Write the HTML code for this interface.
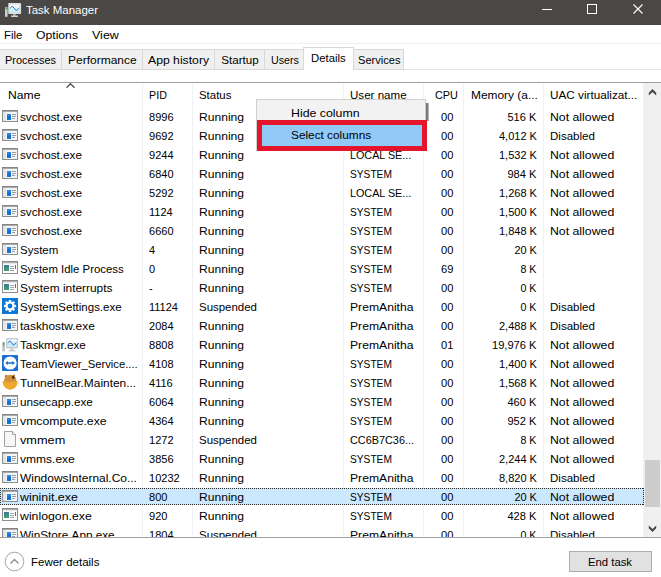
<!DOCTYPE html>
<html><head><meta charset="utf-8"><title>Task Manager</title>
<style>
html,body{margin:0;padding:0;}
body{width:661px;height:577px;overflow:hidden;background:#fff;font-family:"Liberation Sans",sans-serif;font-size:11.6px;color:#000;position:relative;}
.abs{position:absolute;}
.t{position:absolute;white-space:pre;line-height:14px;height:14px;transform-origin:0 0;}
#title{left:0;top:0;width:661px;height:25px;background:#4a4846;}
#menuline{left:0;top:43px;width:661px;height:1px;background:#f0f0f0;}
.tab{position:absolute;top:49px;height:21px;background:#f0f0f0;border:1px solid #d9d9d9;box-sizing:border-box;}
.tab.act{top:47px;height:23px;background:#fff;border-bottom:none;}
#tabline{left:0;top:69px;width:661px;height:1px;background:#e6e6e6;}
#listtop{left:0;top:82px;width:661px;height:1px;background:#a0a0a0;}
#listbot{left:0;top:537px;width:661px;height:1px;background:#a0a0a0;}
.vl{position:absolute;top:83px;width:1px;height:454px;background:#eef2f7;}
#clip{left:0;top:107px;width:661px;height:430px;overflow:hidden;}
#inner{position:absolute;left:0;top:-107px;width:661px;height:577px;}
#sel{left:0;top:488px;width:644px;height:17px;background:#cce8ff;box-sizing:border-box;}
#sel:before,#sel:after{content:"";position:absolute;left:0;width:644px;height:1px;background-image:repeating-linear-gradient(90deg,#2b2b2b 0 1px,transparent 1px 2px);}
#sel:before{top:0;} #sel:after{top:16px;}
#selr{left:643px;top:488px;width:1px;height:17px;background-image:repeating-linear-gradient(180deg,#2b2b2b 0 1px,transparent 1px 2px);}
#sell{left:0;top:488px;width:1px;height:17px;background-image:repeating-linear-gradient(180deg,#2b2b2b 0 1px,transparent 1px 2px);}
#sb{left:644px;top:83px;width:17px;height:454px;background:#f0f0f0;}
#thumb{left:645px;top:460px;width:15px;height:47px;background:#cdcdcd;}
#ctx{left:256px;top:99px;width:170px;height:52px;background:#f2f2f2;border:1px solid #cfcfcf;box-sizing:border-box;}
#shd{left:426px;top:103px;width:3px;height:18px;background:linear-gradient(90deg,#6a6a6a 0,#8a8a8a 60%,#d0d0d0 100%);}
#hl{left:259px;top:123px;width:165px;height:24px;background:#91c9f7;}
#red{left:257px;top:120px;width:170px;height:31px;border:5px solid #e5142b;box-sizing:border-box;}
#btn{left:569px;top:551px;width:83px;height:21px;border:1px solid #adadad;background:#e1e1e1;box-sizing:border-box;}
</style></head><body>
<div id="title" class="abs"></div>
<svg class="abs" style="left:0;top:0" width="30" height="24" viewBox="0 0 30 24"><defs><linearGradient id="scr" x1="0" y1="0" x2="0" y2="1"><stop offset="0" stop-color="#ffffff"/><stop offset="1" stop-color="#bfe8f8"/></linearGradient><linearGradient id="gsq" x1="0" y1="0" x2="0.300" y2="1"><stop offset="0" stop-color="#3a6fa8"/><stop offset="1" stop-color="#41a06a"/></linearGradient></defs><rect x="8.200" y="3" width="12.900" height="11.100" rx="0.800" fill="#dcdcdc"/><rect x="9.800" y="4.600" width="9.400" height="7.800" fill="url(#scr)"/><polyline points="10.200,8.400 12.300,6.100 16.400,10.700 18.900,8.200" fill="none" stroke="#2a74b8" stroke-width="1"/><rect x="13.200" y="14.100" width="2.400" height="1.500" fill="#c4c4c4"/><rect x="10.900" y="15.500" width="7.100" height="1.400" rx="0.600" fill="#d6d6d6"/><rect x="5" y="7.300" width="2.600" height="9.500" fill="#cfcfcf"/><rect x="5.800" y="8" width="1.300" height="1.300" fill="#2f9a3a"/></svg>
<svg class="abs" style="left:540px;top:0" width="121" height="24" viewBox="0 0 121 24"><path d="M2 9.500 H12" stroke="#fff" stroke-width="1" fill="none"/><rect x="47.500" y="4.500" width="9" height="9" fill="none" stroke="#fff"/><path d="M93.500 4.500 L102.500 13.500 M102.500 4.500 L93.500 13.500" stroke="#fff" stroke-width="1.100" fill="none"/></svg>
<div id="menuline" class="abs"></div>
<div id="tabline" class="abs"></div>
<div class="tab" style="left:-1px;width:63px"></div>
<div class="tab" style="left:61px;width:82px"></div>
<div class="tab" style="left:142px;width:73px"></div>
<div class="tab" style="left:214px;width:51px"></div>
<div class="tab" style="left:264px;width:41px"></div>
<div class="tab" style="left:353px;width:51px"></div>
<div class="tab act" style="left:303px;width:51px"></div>
<div id="listtop" class="abs"></div>
<div class="vl" style="left:142px"></div><div class="vl" style="left:192px"></div><div class="vl" style="left:343px"></div><div class="vl" style="left:423px"></div><div class="vl" style="left:463px"></div><div class="vl" style="left:543px"></div><div class="vl" style="left:643px"></div>
<svg class="abs" style="left:66px;top:83px" width="9" height="5" viewBox="0 0 9 5"><path d="M0.500 4.700 L4.500 0.700 L8.500 4.700" fill="none" stroke="#4a4a4a" stroke-width="1.300"/></svg>
<div id="clip" class="abs"><div id="inner">
<div id="sel" class="abs"></div><div id="selr" class="abs"></div><div id="sell" class="abs"></div>
<svg class="abs" style="left:2px;top:108px" width="16" height="16" viewBox="0 0 16 16"><rect x="0.500" y="2.500" width="15" height="11" fill="#f3f6f9" stroke="#8e8e8e"/><rect x="0" y="2" width="16" height="1" fill="#858585"/><rect x="1" y="3" width="14" height="1" fill="#a9a9a9"/><rect x="1" y="4" width="3" height="9" fill="#e1e6ec"/><rect x="5" y="6" width="4" height="6" fill="#1373d3"/><rect x="5" y="6" width="4" height="2" fill="#2b86de"/><rect x="10" y="6" width="4" height="1" fill="#9b9b9b"/><rect x="10" y="8" width="4" height="1" fill="#9b9b9b"/><rect x="10" y="10" width="3" height="1" fill="#9b9b9b"/></svg>
<svg class="abs" style="left:2px;top:127px" width="16" height="16" viewBox="0 0 16 16"><rect x="0.500" y="2.500" width="15" height="11" fill="#f3f6f9" stroke="#8e8e8e"/><rect x="0" y="2" width="16" height="1" fill="#858585"/><rect x="1" y="3" width="14" height="1" fill="#a9a9a9"/><rect x="1" y="4" width="3" height="9" fill="#e1e6ec"/><rect x="5" y="6" width="4" height="6" fill="#1373d3"/><rect x="5" y="6" width="4" height="2" fill="#2b86de"/><rect x="10" y="6" width="4" height="1" fill="#9b9b9b"/><rect x="10" y="8" width="4" height="1" fill="#9b9b9b"/><rect x="10" y="10" width="3" height="1" fill="#9b9b9b"/></svg>
<svg class="abs" style="left:2px;top:146px" width="16" height="16" viewBox="0 0 16 16"><rect x="0.500" y="2.500" width="15" height="11" fill="#f3f6f9" stroke="#8e8e8e"/><rect x="0" y="2" width="16" height="1" fill="#858585"/><rect x="1" y="3" width="14" height="1" fill="#a9a9a9"/><rect x="1" y="4" width="3" height="9" fill="#e1e6ec"/><rect x="5" y="6" width="4" height="6" fill="#1373d3"/><rect x="5" y="6" width="4" height="2" fill="#2b86de"/><rect x="10" y="6" width="4" height="1" fill="#9b9b9b"/><rect x="10" y="8" width="4" height="1" fill="#9b9b9b"/><rect x="10" y="10" width="3" height="1" fill="#9b9b9b"/></svg>
<svg class="abs" style="left:2px;top:165px" width="16" height="16" viewBox="0 0 16 16"><rect x="0.500" y="2.500" width="15" height="11" fill="#f3f6f9" stroke="#8e8e8e"/><rect x="0" y="2" width="16" height="1" fill="#858585"/><rect x="1" y="3" width="14" height="1" fill="#a9a9a9"/><rect x="1" y="4" width="3" height="9" fill="#e1e6ec"/><rect x="5" y="6" width="4" height="6" fill="#1373d3"/><rect x="5" y="6" width="4" height="2" fill="#2b86de"/><rect x="10" y="6" width="4" height="1" fill="#9b9b9b"/><rect x="10" y="8" width="4" height="1" fill="#9b9b9b"/><rect x="10" y="10" width="3" height="1" fill="#9b9b9b"/></svg>
<svg class="abs" style="left:2px;top:184px" width="16" height="16" viewBox="0 0 16 16"><rect x="0.500" y="2.500" width="15" height="11" fill="#f3f6f9" stroke="#8e8e8e"/><rect x="0" y="2" width="16" height="1" fill="#858585"/><rect x="1" y="3" width="14" height="1" fill="#a9a9a9"/><rect x="1" y="4" width="3" height="9" fill="#e1e6ec"/><rect x="5" y="6" width="4" height="6" fill="#1373d3"/><rect x="5" y="6" width="4" height="2" fill="#2b86de"/><rect x="10" y="6" width="4" height="1" fill="#9b9b9b"/><rect x="10" y="8" width="4" height="1" fill="#9b9b9b"/><rect x="10" y="10" width="3" height="1" fill="#9b9b9b"/></svg>
<svg class="abs" style="left:2px;top:203px" width="16" height="16" viewBox="0 0 16 16"><rect x="0.500" y="2.500" width="15" height="11" fill="#f3f6f9" stroke="#8e8e8e"/><rect x="0" y="2" width="16" height="1" fill="#858585"/><rect x="1" y="3" width="14" height="1" fill="#a9a9a9"/><rect x="1" y="4" width="3" height="9" fill="#e1e6ec"/><rect x="5" y="6" width="4" height="6" fill="#1373d3"/><rect x="5" y="6" width="4" height="2" fill="#2b86de"/><rect x="10" y="6" width="4" height="1" fill="#9b9b9b"/><rect x="10" y="8" width="4" height="1" fill="#9b9b9b"/><rect x="10" y="10" width="3" height="1" fill="#9b9b9b"/></svg>
<svg class="abs" style="left:2px;top:222px" width="16" height="16" viewBox="0 0 16 16"><rect x="0.500" y="2.500" width="15" height="11" fill="#f3f6f9" stroke="#8e8e8e"/><rect x="0" y="2" width="16" height="1" fill="#858585"/><rect x="1" y="3" width="14" height="1" fill="#a9a9a9"/><rect x="1" y="4" width="3" height="9" fill="#e1e6ec"/><rect x="5" y="6" width="4" height="6" fill="#1373d3"/><rect x="5" y="6" width="4" height="2" fill="#2b86de"/><rect x="10" y="6" width="4" height="1" fill="#9b9b9b"/><rect x="10" y="8" width="4" height="1" fill="#9b9b9b"/><rect x="10" y="10" width="3" height="1" fill="#9b9b9b"/></svg>
<svg class="abs" style="left:2px;top:241px" width="16" height="16" viewBox="0 0 16 16"><rect x="0.500" y="2.500" width="15" height="11" fill="#f3f6f9" stroke="#8e8e8e"/><rect x="0" y="2" width="16" height="1" fill="#858585"/><rect x="1" y="3" width="14" height="1" fill="#a9a9a9"/><rect x="1" y="4" width="3" height="9" fill="#e1e6ec"/><rect x="5" y="6" width="4" height="6" fill="#1373d3"/><rect x="5" y="6" width="4" height="2" fill="#2b86de"/><rect x="10" y="6" width="4" height="1" fill="#9b9b9b"/><rect x="10" y="8" width="4" height="1" fill="#9b9b9b"/><rect x="10" y="10" width="3" height="1" fill="#9b9b9b"/></svg>
<svg class="abs" style="left:2px;top:260px" width="16" height="16" viewBox="0 0 16 16"><rect x="0.500" y="1.500" width="15" height="12" fill="#fbfcfd" stroke="#8e8e8e"/><rect x="0" y="1" width="16" height="1" fill="#8a8a8a"/><rect x="1" y="2" width="14" height="1" fill="#b4b4b4"/><rect x="1" y="3" width="14" height="1" fill="#e2e6ea"/><rect x="2" y="5" width="5" height="6" fill="url(#gsq)"/><rect x="8" y="6" width="4" height="1" fill="#a5a5a5"/><rect x="8" y="8" width="4" height="1" fill="#a5a5a5"/><rect x="8" y="10" width="4" height="1" fill="#a5a5a5"/><rect x="13" y="5" width="1" height="4" fill="#2f78c4"/></svg>
<svg class="abs" style="left:2px;top:279px" width="16" height="16" viewBox="0 0 16 16"><rect x="0.500" y="1.500" width="15" height="12" fill="#fbfcfd" stroke="#8e8e8e"/><rect x="0" y="1" width="16" height="1" fill="#8a8a8a"/><rect x="1" y="2" width="14" height="1" fill="#b4b4b4"/><rect x="1" y="3" width="14" height="1" fill="#e2e6ea"/><rect x="2" y="5" width="5" height="6" fill="url(#gsq)"/><rect x="8" y="6" width="4" height="1" fill="#a5a5a5"/><rect x="8" y="8" width="4" height="1" fill="#a5a5a5"/><rect x="8" y="10" width="4" height="1" fill="#a5a5a5"/><rect x="13" y="5" width="1" height="4" fill="#2f78c4"/></svg>
<svg class="abs" style="left:2px;top:298px" width="16" height="16" viewBox="0 0 16 16"><rect width="16" height="16" fill="#0a78d6"/><g fill="#fff"><circle cx="8" cy="8" r="4.500"/><rect x="6.800" y="2" width="2.400" height="12"/><rect x="6.800" y="2" width="2.400" height="12" transform="rotate(45 8 8)"/><rect x="6.800" y="2" width="2.400" height="12" transform="rotate(90 8 8)"/><rect x="6.800" y="2" width="2.400" height="12" transform="rotate(135 8 8)"/></g><circle cx="8" cy="8" r="2.400" fill="#0a78d6"/></svg>
<svg class="abs" style="left:2px;top:317px" width="16" height="16" viewBox="0 0 16 16"><rect x="0.500" y="2.500" width="15" height="11" fill="#f3f6f9" stroke="#8e8e8e"/><rect x="0" y="2" width="16" height="1" fill="#858585"/><rect x="1" y="3" width="14" height="1" fill="#a9a9a9"/><rect x="1" y="4" width="3" height="9" fill="#e1e6ec"/><rect x="5" y="6" width="4" height="6" fill="#1373d3"/><rect x="5" y="6" width="4" height="2" fill="#2b86de"/><rect x="10" y="6" width="4" height="1" fill="#9b9b9b"/><rect x="10" y="8" width="4" height="1" fill="#9b9b9b"/><rect x="10" y="10" width="3" height="1" fill="#9b9b9b"/></svg>
<svg class="abs" style="left:2px;top:336px" width="16" height="16" viewBox="0 0 16 16"><rect x="4" y="2" width="12" height="10.500" rx="0.700" fill="#c6cbd0"/><rect x="5.400" y="3.400" width="9.200" height="7.600" fill="#c9ecfa"/><rect x="5.400" y="3.400" width="9.200" height="3" fill="#eaf8fe"/><polyline points="5.800,7 7.800,4.800 11.600,9.200 14.200,6.800" fill="none" stroke="#2a74b8" stroke-width="1"/><rect x="8.800" y="12.500" width="2.400" height="1.500" fill="#bcc0c3"/><rect x="6.500" y="14" width="7" height="1.400" rx="0.600" fill="#c9cdd0"/><rect x="0.300" y="6" width="2.600" height="9.400" fill="#b9bfb9"/><rect x="0.900" y="6.600" width="1.400" height="3" fill="#58b048"/></svg>
<svg class="abs" style="left:2px;top:355px" width="16" height="16" viewBox="0 0 16 16"><rect width="16" height="16" rx="0.800" fill="#1a70d2"/><circle cx="8.100" cy="8" r="6.600" fill="#fff"/><path d="M3.200 8 L6 5.900 V7.350 H10.200 V5.900 L13 8 L10.200 10.100 V8.650 H6 V10.100 Z" fill="#1a70d2"/></svg>
<svg class="abs" style="left:2px;top:374px" width="16" height="16" viewBox="0 0 16 16"><circle cx="4.300" cy="2.200" r="1.500" fill="#bd7c33"/><circle cx="11.900" cy="1.700" r="1.200" fill="#bd7c33"/><ellipse cx="8.300" cy="6.300" rx="6.100" ry="5.600" fill="#d28f3e"/><path d="M0.600 7.400 H15.700 A7.550 8.400 0 0 1 0.600 7.400 Z" fill="#eeaa2d"/><path d="M0.600 7.400 H15.700 L15.600 8.300 H0.700 Z" fill="#d8982f"/><ellipse cx="11.200" cy="3.400" rx="1.100" ry="1.400" fill="#2b2018"/></svg>
<svg class="abs" style="left:2px;top:393px" width="16" height="16" viewBox="0 0 16 16"><rect x="0.500" y="2.500" width="15" height="11" fill="#f3f6f9" stroke="#8e8e8e"/><rect x="0" y="2" width="16" height="1" fill="#858585"/><rect x="1" y="3" width="14" height="1" fill="#a9a9a9"/><rect x="1" y="4" width="3" height="9" fill="#e1e6ec"/><rect x="5" y="6" width="4" height="6" fill="#1373d3"/><rect x="5" y="6" width="4" height="2" fill="#2b86de"/><rect x="10" y="6" width="4" height="1" fill="#9b9b9b"/><rect x="10" y="8" width="4" height="1" fill="#9b9b9b"/><rect x="10" y="10" width="3" height="1" fill="#9b9b9b"/></svg>
<svg class="abs" style="left:2px;top:412px" width="16" height="16" viewBox="0 0 16 16"><rect x="0.500" y="2.500" width="15" height="11" fill="#f3f6f9" stroke="#8e8e8e"/><rect x="0" y="2" width="16" height="1" fill="#858585"/><rect x="1" y="3" width="14" height="1" fill="#a9a9a9"/><rect x="1" y="4" width="3" height="9" fill="#e1e6ec"/><rect x="5" y="6" width="4" height="6" fill="#1373d3"/><rect x="5" y="6" width="4" height="2" fill="#2b86de"/><rect x="10" y="6" width="4" height="1" fill="#9b9b9b"/><rect x="10" y="8" width="4" height="1" fill="#9b9b9b"/><rect x="10" y="10" width="3" height="1" fill="#9b9b9b"/></svg>
<svg class="abs" style="left:2px;top:431px" width="16" height="16" viewBox="0 0 16 16"><path d="M2.500 0.500 H10.500 L13.500 3.500 V15.500 H2.500 Z" fill="#f7f7f7" stroke="#a3a3a3"/><path d="M10.500 0.500 V3.500 H13.500" fill="#fff" stroke="#a3a3a3"/></svg>
<svg class="abs" style="left:2px;top:450px" width="16" height="16" viewBox="0 0 16 16"><rect x="0.500" y="2.500" width="15" height="11" fill="#f3f6f9" stroke="#8e8e8e"/><rect x="0" y="2" width="16" height="1" fill="#858585"/><rect x="1" y="3" width="14" height="1" fill="#a9a9a9"/><rect x="1" y="4" width="3" height="9" fill="#e1e6ec"/><rect x="5" y="6" width="4" height="6" fill="#1373d3"/><rect x="5" y="6" width="4" height="2" fill="#2b86de"/><rect x="10" y="6" width="4" height="1" fill="#9b9b9b"/><rect x="10" y="8" width="4" height="1" fill="#9b9b9b"/><rect x="10" y="10" width="3" height="1" fill="#9b9b9b"/></svg>
<svg class="abs" style="left:2px;top:469px" width="16" height="16" viewBox="0 0 16 16"><rect x="0.500" y="2.500" width="15" height="11" fill="#f3f6f9" stroke="#8e8e8e"/><rect x="0" y="2" width="16" height="1" fill="#858585"/><rect x="1" y="3" width="14" height="1" fill="#a9a9a9"/><rect x="1" y="4" width="3" height="9" fill="#e1e6ec"/><rect x="5" y="6" width="4" height="6" fill="#1373d3"/><rect x="5" y="6" width="4" height="2" fill="#2b86de"/><rect x="10" y="6" width="4" height="1" fill="#9b9b9b"/><rect x="10" y="8" width="4" height="1" fill="#9b9b9b"/><rect x="10" y="10" width="3" height="1" fill="#9b9b9b"/></svg>
<svg class="abs" style="left:2px;top:488px" width="16" height="16" viewBox="0 0 16 16"><rect x="0.500" y="2.500" width="15" height="11" fill="#f3f6f9" stroke="#8e8e8e"/><rect x="0" y="2" width="16" height="1" fill="#858585"/><rect x="1" y="3" width="14" height="1" fill="#a9a9a9"/><rect x="1" y="4" width="3" height="9" fill="#e1e6ec"/><rect x="5" y="6" width="4" height="6" fill="#1373d3"/><rect x="5" y="6" width="4" height="2" fill="#2b86de"/><rect x="10" y="6" width="4" height="1" fill="#9b9b9b"/><rect x="10" y="8" width="4" height="1" fill="#9b9b9b"/><rect x="10" y="10" width="3" height="1" fill="#9b9b9b"/></svg>
<svg class="abs" style="left:2px;top:507px" width="16" height="16" viewBox="0 0 16 16"><rect x="0.500" y="1.500" width="15" height="12" fill="#fbfcfd" stroke="#8e8e8e"/><rect x="0" y="1" width="16" height="1" fill="#8a8a8a"/><rect x="1" y="2" width="14" height="1" fill="#b4b4b4"/><rect x="1" y="3" width="14" height="1" fill="#e2e6ea"/><rect x="2" y="5" width="5" height="6" fill="url(#gsq)"/><rect x="8" y="6" width="4" height="1" fill="#a5a5a5"/><rect x="8" y="8" width="4" height="1" fill="#a5a5a5"/><rect x="8" y="10" width="4" height="1" fill="#a5a5a5"/><rect x="13" y="5" width="1" height="4" fill="#2f78c4"/></svg>
<svg class="abs" style="left:2px;top:526px" width="16" height="16" viewBox="0 0 16 16"><rect x="0.500" y="2.500" width="15" height="11" fill="#f3f6f9" stroke="#8e8e8e"/><rect x="0" y="2" width="16" height="1" fill="#858585"/><rect x="1" y="3" width="14" height="1" fill="#a9a9a9"/><rect x="1" y="4" width="3" height="9" fill="#e1e6ec"/><rect x="5" y="6" width="4" height="6" fill="#1373d3"/><rect x="5" y="6" width="4" height="2" fill="#2b86de"/><rect x="10" y="6" width="4" height="1" fill="#9b9b9b"/><rect x="10" y="8" width="4" height="1" fill="#9b9b9b"/><rect x="10" y="10" width="3" height="1" fill="#9b9b9b"/></svg>
<span class="t" style="left:19.7px;top:110.0px;transform:scaleX(1.013);">svchost.exe</span>
<span class="t" style="left:148.9px;top:110.0px;transform:scaleX(0.950);">8996</span>
<span class="t" style="left:198.8px;top:110.0px;transform:scaleX(1.044);">Running</span>
<span class="t" style="left:440.7px;top:110.0px;transform:scaleX(0.960);">00</span>
<span class="t" style="right:124.3px;top:110.0px;transform-origin:100% 0;transform:scaleX(0.954);">516 K</span>
<span class="t" style="left:550.0px;top:110.0px;transform:scaleX(1.060);">Not allowed</span>
<span class="t" style="left:19.7px;top:129.0px;transform:scaleX(1.013);">svchost.exe</span>
<span class="t" style="left:148.9px;top:129.0px;transform:scaleX(0.950);">9692</span>
<span class="t" style="left:198.8px;top:129.0px;transform:scaleX(1.044);">Running</span>
<span class="t" style="left:440.7px;top:129.0px;transform:scaleX(0.960);">00</span>
<span class="t" style="right:124.3px;top:129.0px;transform-origin:100% 0;transform:scaleX(0.950);">4,012 K</span>
<span class="t" style="left:550.0px;top:129.0px;transform:scaleX(0.995);">Disabled</span>
<span class="t" style="left:19.7px;top:148.0px;transform:scaleX(1.013);">svchost.exe</span>
<span class="t" style="left:148.9px;top:148.0px;transform:scaleX(0.950);">9244</span>
<span class="t" style="left:198.8px;top:148.0px;transform:scaleX(1.044);">Running</span>
<span class="t" style="left:349.9px;top:148.0px;transform:scaleX(0.929);">LOCAL SE...</span>
<span class="t" style="left:440.7px;top:148.0px;transform:scaleX(0.960);">00</span>
<span class="t" style="right:124.3px;top:148.0px;transform-origin:100% 0;transform:scaleX(0.950);">1,532 K</span>
<span class="t" style="left:550.0px;top:148.0px;transform:scaleX(1.060);">Not allowed</span>
<span class="t" style="left:19.7px;top:167.0px;transform:scaleX(1.013);">svchost.exe</span>
<span class="t" style="left:148.9px;top:167.0px;transform:scaleX(0.950);">6840</span>
<span class="t" style="left:198.8px;top:167.0px;transform:scaleX(1.044);">Running</span>
<span class="t" style="left:349.9px;top:167.0px;transform:scaleX(0.879);">SYSTEM</span>
<span class="t" style="left:440.7px;top:167.0px;transform:scaleX(0.960);">00</span>
<span class="t" style="right:124.3px;top:167.0px;transform-origin:100% 0;transform:scaleX(0.954);">984 K</span>
<span class="t" style="left:550.0px;top:167.0px;transform:scaleX(1.060);">Not allowed</span>
<span class="t" style="left:19.7px;top:186.0px;transform:scaleX(1.013);">svchost.exe</span>
<span class="t" style="left:148.9px;top:186.0px;transform:scaleX(0.950);">5292</span>
<span class="t" style="left:198.8px;top:186.0px;transform:scaleX(1.044);">Running</span>
<span class="t" style="left:349.9px;top:186.0px;transform:scaleX(0.929);">LOCAL SE...</span>
<span class="t" style="left:440.7px;top:186.0px;transform:scaleX(0.960);">00</span>
<span class="t" style="right:124.3px;top:186.0px;transform-origin:100% 0;transform:scaleX(0.950);">1,268 K</span>
<span class="t" style="left:550.0px;top:186.0px;transform:scaleX(1.060);">Not allowed</span>
<span class="t" style="left:19.7px;top:205.0px;transform:scaleX(1.013);">svchost.exe</span>
<span class="t" style="left:148.9px;top:205.0px;transform:scaleX(0.950);">1124</span>
<span class="t" style="left:198.8px;top:205.0px;transform:scaleX(1.044);">Running</span>
<span class="t" style="left:349.9px;top:205.0px;transform:scaleX(0.879);">SYSTEM</span>
<span class="t" style="left:440.7px;top:205.0px;transform:scaleX(0.960);">00</span>
<span class="t" style="right:124.3px;top:205.0px;transform-origin:100% 0;transform:scaleX(0.950);">1,500 K</span>
<span class="t" style="left:550.0px;top:205.0px;transform:scaleX(1.060);">Not allowed</span>
<span class="t" style="left:19.7px;top:224.0px;transform:scaleX(1.013);">svchost.exe</span>
<span class="t" style="left:148.9px;top:224.0px;transform:scaleX(0.950);">6660</span>
<span class="t" style="left:198.8px;top:224.0px;transform:scaleX(1.044);">Running</span>
<span class="t" style="left:349.9px;top:224.0px;transform:scaleX(0.879);">SYSTEM</span>
<span class="t" style="left:440.7px;top:224.0px;transform:scaleX(0.960);">00</span>
<span class="t" style="right:124.3px;top:224.0px;transform-origin:100% 0;transform:scaleX(0.950);">1,848 K</span>
<span class="t" style="left:550.0px;top:224.0px;transform:scaleX(1.060);">Not allowed</span>
<span class="t" style="left:19.7px;top:243.0px;transform:scaleX(0.991);">System</span>
<span class="t" style="left:148.9px;top:243.0px;transform:scaleX(0.950);">4</span>
<span class="t" style="left:198.8px;top:243.0px;transform:scaleX(1.044);">Running</span>
<span class="t" style="left:349.9px;top:243.0px;transform:scaleX(0.879);">SYSTEM</span>
<span class="t" style="left:440.7px;top:243.0px;transform:scaleX(0.960);">00</span>
<span class="t" style="right:124.3px;top:243.0px;transform-origin:100% 0;transform:scaleX(0.941);">20 K</span>
<span class="t" style="left:19.7px;top:262.0px;transform:scaleX(0.981);">System Idle Process</span>
<span class="t" style="left:148.9px;top:262.0px;transform:scaleX(0.950);">0</span>
<span class="t" style="left:198.8px;top:262.0px;transform:scaleX(1.044);">Running</span>
<span class="t" style="left:349.9px;top:262.0px;transform:scaleX(0.879);">SYSTEM</span>
<span class="t" style="left:440.7px;top:262.0px;transform:scaleX(0.960);">69</span>
<span class="t" style="right:124.3px;top:262.0px;transform-origin:100% 0;transform:scaleX(0.917);">8 K</span>
<span class="t" style="left:19.7px;top:281.0px;transform:scaleX(1.025);">System interrupts</span>
<span class="t" style="left:148.9px;top:281.0px;transform:scaleX(0.950);">-</span>
<span class="t" style="left:198.8px;top:281.0px;transform:scaleX(1.044);">Running</span>
<span class="t" style="left:349.9px;top:281.0px;transform:scaleX(0.879);">SYSTEM</span>
<span class="t" style="left:440.7px;top:281.0px;transform:scaleX(0.960);">00</span>
<span class="t" style="right:124.3px;top:281.0px;transform-origin:100% 0;transform:scaleX(0.917);">0 K</span>
<span class="t" style="left:19.7px;top:300.0px;transform:scaleX(0.992);">SystemSettings.exe</span>
<span class="t" style="left:148.9px;top:300.0px;transform:scaleX(0.950);">11124</span>
<span class="t" style="left:198.8px;top:300.0px;transform:scaleX(0.987);">Suspended</span>
<span class="t" style="left:349.9px;top:300.0px;transform:scaleX(1.048);">PremAnitha</span>
<span class="t" style="left:440.7px;top:300.0px;transform:scaleX(0.960);">00</span>
<span class="t" style="right:124.3px;top:300.0px;transform-origin:100% 0;transform:scaleX(0.917);">0 K</span>
<span class="t" style="left:550.0px;top:300.0px;transform:scaleX(0.995);">Disabled</span>
<span class="t" style="left:19.7px;top:319.0px;transform:scaleX(1.027);">taskhostw.exe</span>
<span class="t" style="left:148.9px;top:319.0px;transform:scaleX(0.950);">2084</span>
<span class="t" style="left:198.8px;top:319.0px;transform:scaleX(1.044);">Running</span>
<span class="t" style="left:349.9px;top:319.0px;transform:scaleX(1.048);">PremAnitha</span>
<span class="t" style="left:440.7px;top:319.0px;transform:scaleX(0.960);">00</span>
<span class="t" style="right:124.3px;top:319.0px;transform-origin:100% 0;transform:scaleX(0.950);">2,488 K</span>
<span class="t" style="left:550.0px;top:319.0px;transform:scaleX(0.995);">Disabled</span>
<span class="t" style="left:19.7px;top:338.0px;transform:scaleX(1.011);">Taskmgr.exe</span>
<span class="t" style="left:148.9px;top:338.0px;transform:scaleX(0.950);">8808</span>
<span class="t" style="left:198.8px;top:338.0px;transform:scaleX(1.044);">Running</span>
<span class="t" style="left:349.9px;top:338.0px;transform:scaleX(1.048);">PremAnitha</span>
<span class="t" style="left:440.7px;top:338.0px;transform:scaleX(0.960);">01</span>
<span class="t" style="right:124.3px;top:338.0px;transform-origin:100% 0;transform:scaleX(0.958);">19,976 K</span>
<span class="t" style="left:550.0px;top:338.0px;transform:scaleX(1.060);">Not allowed</span>
<span class="t" style="left:19.7px;top:357.0px;transform:scaleX(0.968);">TeamViewer_Service....</span>
<span class="t" style="left:148.9px;top:357.0px;transform:scaleX(0.950);">4108</span>
<span class="t" style="left:198.8px;top:357.0px;transform:scaleX(1.044);">Running</span>
<span class="t" style="left:349.9px;top:357.0px;transform:scaleX(0.879);">SYSTEM</span>
<span class="t" style="left:440.7px;top:357.0px;transform:scaleX(0.960);">00</span>
<span class="t" style="right:124.3px;top:357.0px;transform-origin:100% 0;transform:scaleX(0.950);">1,400 K</span>
<span class="t" style="left:550.0px;top:357.0px;transform:scaleX(1.060);">Not allowed</span>
<span class="t" style="left:19.7px;top:376.0px;transform:scaleX(1.028);">TunnelBear.Mainten...</span>
<span class="t" style="left:148.9px;top:376.0px;transform:scaleX(0.950);">4116</span>
<span class="t" style="left:198.8px;top:376.0px;transform:scaleX(1.044);">Running</span>
<span class="t" style="left:349.9px;top:376.0px;transform:scaleX(0.879);">SYSTEM</span>
<span class="t" style="left:440.7px;top:376.0px;transform:scaleX(0.960);">00</span>
<span class="t" style="right:124.3px;top:376.0px;transform-origin:100% 0;transform:scaleX(0.950);">1,568 K</span>
<span class="t" style="left:550.0px;top:376.0px;transform:scaleX(1.060);">Not allowed</span>
<span class="t" style="left:19.7px;top:395.0px;transform:scaleX(1.008);">unsecapp.exe</span>
<span class="t" style="left:148.9px;top:395.0px;transform:scaleX(0.950);">6064</span>
<span class="t" style="left:198.8px;top:395.0px;transform:scaleX(1.044);">Running</span>
<span class="t" style="left:349.9px;top:395.0px;transform:scaleX(0.879);">SYSTEM</span>
<span class="t" style="left:440.7px;top:395.0px;transform:scaleX(0.960);">00</span>
<span class="t" style="right:124.3px;top:395.0px;transform-origin:100% 0;transform:scaleX(0.954);">460 K</span>
<span class="t" style="left:550.0px;top:395.0px;transform:scaleX(1.060);">Not allowed</span>
<span class="t" style="left:19.7px;top:414.0px;transform:scaleX(1.059);">vmcompute.exe</span>
<span class="t" style="left:148.9px;top:414.0px;transform:scaleX(0.950);">4364</span>
<span class="t" style="left:198.8px;top:414.0px;transform:scaleX(1.044);">Running</span>
<span class="t" style="left:349.9px;top:414.0px;transform:scaleX(0.879);">SYSTEM</span>
<span class="t" style="left:440.7px;top:414.0px;transform:scaleX(0.960);">00</span>
<span class="t" style="right:124.3px;top:414.0px;transform-origin:100% 0;transform:scaleX(0.954);">952 K</span>
<span class="t" style="left:550.0px;top:414.0px;transform:scaleX(1.060);">Not allowed</span>
<span class="t" style="left:19.7px;top:433.0px;transform:scaleX(1.099);">vmmem</span>
<span class="t" style="left:148.9px;top:433.0px;transform:scaleX(0.950);">1272</span>
<span class="t" style="left:198.8px;top:433.0px;transform:scaleX(0.987);">Suspended</span>
<span class="t" style="left:349.9px;top:433.0px;transform:scaleX(0.937);">CC6B7C36...</span>
<span class="t" style="left:440.7px;top:433.0px;transform:scaleX(0.960);">00</span>
<span class="t" style="right:124.3px;top:433.0px;transform-origin:100% 0;transform:scaleX(0.917);">8 K</span>
<span class="t" style="left:550.0px;top:433.0px;transform:scaleX(1.060);">Not allowed</span>
<span class="t" style="left:19.7px;top:452.0px;transform:scaleX(1.037);">vmms.exe</span>
<span class="t" style="left:148.9px;top:452.0px;transform:scaleX(0.950);">3856</span>
<span class="t" style="left:198.8px;top:452.0px;transform:scaleX(1.044);">Running</span>
<span class="t" style="left:349.9px;top:452.0px;transform:scaleX(0.879);">SYSTEM</span>
<span class="t" style="left:440.7px;top:452.0px;transform:scaleX(0.960);">00</span>
<span class="t" style="right:124.3px;top:452.0px;transform-origin:100% 0;transform:scaleX(0.950);">2,244 K</span>
<span class="t" style="left:550.0px;top:452.0px;transform:scaleX(1.060);">Not allowed</span>
<span class="t" style="left:19.7px;top:471.0px;transform:scaleX(1.031);">WindowsInternal.Co...</span>
<span class="t" style="left:148.9px;top:471.0px;transform:scaleX(0.950);">10232</span>
<span class="t" style="left:198.8px;top:471.0px;transform:scaleX(1.044);">Running</span>
<span class="t" style="left:349.9px;top:471.0px;transform:scaleX(1.048);">PremAnitha</span>
<span class="t" style="left:440.7px;top:471.0px;transform:scaleX(0.960);">00</span>
<span class="t" style="right:124.3px;top:471.0px;transform-origin:100% 0;transform:scaleX(0.950);">8,820 K</span>
<span class="t" style="left:550.0px;top:471.0px;transform:scaleX(0.995);">Disabled</span>
<span class="t" style="left:19.7px;top:490.0px;transform:scaleX(1.068);">wininit.exe</span>
<span class="t" style="left:148.9px;top:490.0px;transform:scaleX(0.950);">800</span>
<span class="t" style="left:198.8px;top:490.0px;transform:scaleX(1.044);">Running</span>
<span class="t" style="left:349.9px;top:490.0px;transform:scaleX(0.879);">SYSTEM</span>
<span class="t" style="left:440.7px;top:490.0px;transform:scaleX(0.960);">00</span>
<span class="t" style="right:124.3px;top:490.0px;transform-origin:100% 0;transform:scaleX(0.941);">20 K</span>
<span class="t" style="left:550.0px;top:490.0px;transform:scaleX(1.060);">Not allowed</span>
<span class="t" style="left:19.7px;top:509.0px;transform:scaleX(1.061);">winlogon.exe</span>
<span class="t" style="left:148.9px;top:509.0px;transform:scaleX(0.950);">920</span>
<span class="t" style="left:198.8px;top:509.0px;transform:scaleX(1.044);">Running</span>
<span class="t" style="left:349.9px;top:509.0px;transform:scaleX(0.879);">SYSTEM</span>
<span class="t" style="left:440.7px;top:509.0px;transform:scaleX(0.960);">00</span>
<span class="t" style="right:124.3px;top:509.0px;transform-origin:100% 0;transform:scaleX(0.954);">428 K</span>
<span class="t" style="left:550.0px;top:509.0px;transform:scaleX(1.060);">Not allowed</span>
<span class="t" style="left:19.7px;top:528.0px;transform:scaleX(1.013);">WinStore.App.exe</span>
<span class="t" style="left:148.9px;top:528.0px;transform:scaleX(0.950);">1804</span>
<span class="t" style="left:198.8px;top:528.0px;transform:scaleX(0.987);">Suspended</span>
<span class="t" style="left:349.9px;top:528.0px;transform:scaleX(1.048);">PremAnitha</span>
<span class="t" style="left:440.7px;top:528.0px;transform:scaleX(0.960);">00</span>
<span class="t" style="right:124.3px;top:528.0px;transform-origin:100% 0;transform:scaleX(0.917);">0 K</span>
<span class="t" style="left:550.0px;top:528.0px;transform:scaleX(0.995);">Disabled</span>
</div></div>
<div id="sb" class="abs"></div><div id="thumb" class="abs"></div>
<svg class="abs" style="left:644px;top:83px" width="17" height="17" viewBox="0 0 17 17"><path d="M4.800 9.700 L8.500 6 L12.200 9.700 V12.600 L8.500 8.900 L4.800 12.600 Z" fill="#454545"/></svg>
<svg class="abs" style="left:644px;top:520px" width="17" height="17" viewBox="0 0 17 17"><path d="M4.800 8.300 L8.500 12 L12.200 8.300 V5.400 L8.500 9.100 L4.800 5.400 Z" fill="#454545"/></svg>
<div id="listbot" class="abs"></div>
<div id="shd" class="abs"></div>
<div id="ctx" class="abs"></div>
<div id="hl" class="abs"></div>
<div id="red" class="abs"></div>
<svg class="abs" style="left:4px;top:551px" width="21" height="21" viewBox="0 0 21 21"><circle cx="10.500" cy="10.500" r="9.300" fill="none" stroke="#a6a6a6" stroke-width="1"/><path d="M6.500 12.500 L10.500 8.500 L14.500 12.500" fill="none" stroke="#8c8c8c" stroke-width="1.300"/></svg>
<div id="btn" class="abs"></div>
<span class="t" style="left:26.4px;top:3.0px;transform:scaleX(0.989);color:#fff;">Task Manager</span>
<span class="t" style="left:4.1px;top:28.0px;transform:scaleX(0.974);">File</span>
<span class="t" style="left:36.4px;top:28.0px;transform:scaleX(1.051);">Options</span>
<span class="t" style="left:92.2px;top:28.0px;transform:scaleX(1.079);">View</span>
<span class="t" style="left:4.9px;top:52.5px;transform:scaleX(0.944);">Processes</span>
<span class="t" style="left:68.0px;top:52.5px;transform:scaleX(1.034);">Performance</span>
<span class="t" style="left:148.1px;top:52.5px;transform:scaleX(1.053);">App history</span>
<span class="t" style="left:221.3px;top:52.5px;transform:scaleX(1.000);">Startup</span>
<span class="t" style="left:271.2px;top:52.5px;transform:scaleX(0.921);">Users</span>
<span class="t" style="left:311.4px;top:50.5px;transform:scaleX(0.979);">Details</span>
<span class="t" style="left:358.1px;top:52.5px;transform:scaleX(0.956);">Services</span>
<span class="t" style="left:8.2px;top:87.5px;transform:scaleX(1.049);">Name</span>
<span class="t" style="left:148.9px;top:87.5px;transform:scaleX(0.926);">PID</span>
<span class="t" style="left:198.8px;top:87.5px;transform:scaleX(0.986);">Status</span>
<span class="t" style="left:350.0px;top:87.5px;transform:scaleX(0.998);">User name</span>
<span class="t" style="left:435.3px;top:87.5px;transform:scaleX(0.939);">CPU</span>
<span class="t" style="left:471.3px;top:87.5px;transform:scaleX(1.027);">Memory (a...</span>
<span class="t" style="left:550.0px;top:87.5px;transform:scaleX(1.012);">UAC virtualizat...</span>
<span class="t" style="left:291.0px;top:105.5px;transform:scaleX(1.064);">Hide column</span>
<span class="t" style="left:291.0px;top:127.5px;transform:scaleX(1.019);">Select columns</span>
<span class="t" style="left:31.1px;top:554.5px;transform:scaleX(0.992);">Fewer details</span>
<span class="t" style="left:587.9px;top:554.5px;transform:scaleX(0.975);">End task</span>
</body></html>
